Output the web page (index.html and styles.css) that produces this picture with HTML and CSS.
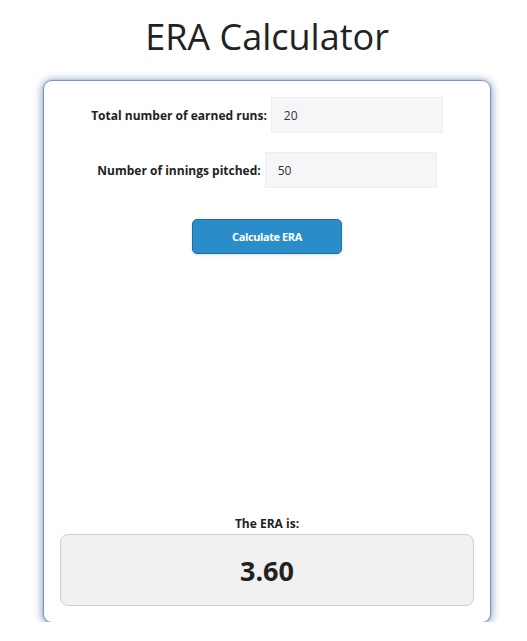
FILE: index.html
```html
<!DOCTYPE html>
<html>
<head>
<meta charset="utf-8">
<link rel="stylesheet" href="styles.css">
</head>
<body>
<div class="wrap">
  <h1 class="title">ERA Calculator</h1>
  <div class="card">
    <div class="row">
      <label class="label">Total number of earned runs:</label>
      <input class="field" type="text" value="20">
    </div>
    <div class="row row2">
      <label class="label">Number of innings pitched:</label>
      <input class="field" type="text" value="50">
    </div>
    <div class="actions">
      <button class="btn">Calculate ERA</button>
    </div>
    <div class="result">
      <div class="result-label">The ERA is:</div>
      <div class="result-box">3.60</div>
    </div>
  </div>
</div>
</body>
</html>
```
FILE: styles.css
```css
html, body {
  margin: 0;
  padding: 0;
  background: #ffffff;
}
body {
  font-family: "Open Sans", "Noto Sans", sans-serif;
  color: #222222;
}
.wrap {
  width: 446px;
  margin-left: 44px;
}
.title {
  margin: 13px 0 20px;
  font-size: 36px;
  line-height: 48px;
  font-weight: 400;
  text-align: center;
  color: #222;
}
.card {
  box-sizing: border-box;
  height: 541px;
  padding: 16px;
  background: #fff;
  border-radius: 8px;
  box-shadow: 0 0 1px 1px rgba(110, 140, 180, 0.9), 0 1px 8px 2px rgba(80, 115, 165, 0.65);
  display: flex;
  flex-direction: column;
}
.row {
  display: flex;
  justify-content: center;
  align-items: center;
  gap: 4px;
}
.row2 {
  margin-top: 19px;
}
.label {
  font-size: 12px;
  font-weight: 700;
  color: #222;
}
.field {
  box-sizing: border-box;
  width: 172px;
  height: 36px;
  border: 1px solid #eeeff1;
  background: #f5f6f8;
  padding: 0 12px;
  font-family: "Open Sans", sans-serif;
  font-size: 12px;
  color: #333;
  outline: none;
}
.actions {
  display: flex;
  justify-content: center;
  margin-top: 31px;
}
.btn {
  box-sizing: border-box;
  width: 150px;
  height: 35px;
  background: #2a8dca;
  border: 1px solid #1d6ca3;
  border-radius: 5px;
  color: #fff;
  font-family: "Open Sans", sans-serif;
  font-size: 11px;
  font-weight: 700;
  letter-spacing: -0.4px;
  box-shadow: 0 1px 3px rgba(0, 0, 0, 0.15);
}
.result {
  margin-top: auto;
  display: flex;
  flex-direction: column;
  align-items: center;
}
.result-label {
  font-size: 12px;
  font-weight: 700;
  line-height: 17px;
  margin-bottom: 2px;
  color: #222;
}
.result-box {
  box-sizing: border-box;
  width: 100%;
  height: 72px;
  background: #f1f1f1;
  border: 1px solid #cfcfcf;
  border-radius: 8px;
  display: flex;
  align-items: center;
  justify-content: center;
  font-size: 27px;
  font-weight: 700;
  color: #222;
}
```
